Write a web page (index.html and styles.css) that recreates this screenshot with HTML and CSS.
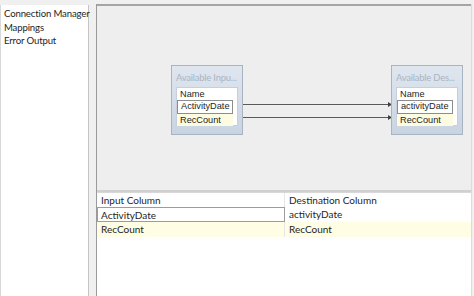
FILE: index.html
```html
<!DOCTYPE html>
<html lang="en">

<head>
    <meta charset="UTF-8">
    <link rel="stylesheet" href="styles.css">
    <title>Mappings</title>
</head>

<body>
    <div class="editor">
        <div class="nav">
            <div class="nav-item">Connection Manager</div>
            <div class="nav-item">Mappings</div>
            <div class="nav-item">Error Output</div>
        </div>

        <div class="main">
            <div class="canvas">
                <div class="table-box box-input">
                    <div class="box-title">Available Inpu...</div>
                    <div class="box-list">
                        <div class="box-row">Name</div>
                        <div class="box-row selected">ActivityDate</div>
                        <div class="box-row mapped">RecCount</div>
                    </div>
                </div>

                <svg class="links" width="150" height="30" viewBox="0 0 150 30">
                    <line x1="0" y1="5.5" x2="148" y2="5.5" stroke="#5a5a5a" stroke-width="1" />
                    <line x1="0" y1="18.5" x2="148" y2="18.5" stroke="#5a5a5a" stroke-width="1" />
                    <polygon points="145,3 149,5.5 145,8" fill="#404040" />
                    <polygon points="145,16 149,18.5 145,21" fill="#404040" />
                </svg>

                <div class="table-box box-dest">
                    <div class="box-title">Available Des...</div>
                    <div class="box-list">
                        <div class="box-row">Name</div>
                        <div class="box-row selected">activityDate</div>
                        <div class="box-row mapped">RecCount</div>
                    </div>
                </div>
            </div>

            <div class="grid">
                <div class="grid-row grid-head">
                    <div class="cell col-input">Input Column</div>
                    <div class="cell">Destination Column</div>
                </div>
                <div class="grid-row">
                    <div class="cell col-input focused">ActivityDate</div>
                    <div class="cell">activityDate</div>
                </div>
                <div class="grid-row highlight">
                    <div class="cell col-input">RecCount</div>
                    <div class="cell">RecCount</div>
                </div>
            </div>
        </div>
    </div>
</body>

</html>
```

FILE: styles.css
```css
/* Page */
body {
    margin: 0;
    background-color: #f0f0f0;
    font-family: Lato, "Open Sans", sans-serif;
    font-size: 10px;
    color: #1e1e1e;
}

.editor {
    display: flex;
    height: 296px;
    overflow: hidden;
}

/* Left navigation */
.nav {
    width: 84px;
    margin-top: 5px;
    padding: 2px 0 0 3px;
    background-color: white;
    border-left: 1px solid #d8d8d8;
    border-right: 1px solid #c4c4c4;
    font-size: 9.6px;
    letter-spacing: -0.15px;
}

.nav-item {
    height: 13.5px;
    line-height: 13.5px;
    white-space: nowrap;
}

/* Right side */
.main {
    flex: 1;
    margin-left: 7px;
    margin-top: 4px;
    margin-right: 2px;
    display: flex;
    flex-direction: column;
    border-left: 1px solid #9a9a9a;
    border-right: 1px solid #dcdcdc;
}

.canvas {
    position: relative;
    height: 184px;
    background-color: #eeeeee;
    border-top: 2px solid #a5a5a5;
    border-bottom: 2px solid #d0d0d0;
}

/* Table boxes on the diagram */
.table-box {
    position: absolute;
    top: 59px;
    width: 72px;
    height: 70px;
    padding: 0 4px;
    box-sizing: border-box;
    border: 1px solid #a9b4c2;
    background: linear-gradient(#dfe6ef, #c9d4e2);
}

.box-input {
    left: 74px;
}

.box-dest {
    left: 294px;
}

.box-title {
    height: 21px;
    line-height: 24px;
    color: #aab4c2;
    font-size: 9.4px;
    letter-spacing: -0.2px;
    white-space: nowrap;
    overflow: hidden;
}

.box-list {
    background-color: white;
    border: 1px solid #c6cfdb;
    height: 36px;
    padding-top: 1px;
}

.box-row {
    height: 11px;
    line-height: 11px;
    padding-left: 3px;
    font-size: 9.2px;
    font-family: "Liberation Sans", Arial, sans-serif;
}

.box-row.selected {
    height: 12px;
    border: 1px solid #8d8d8d;
    margin-right: 4px;
    line-height: 10px;
}

.box-row.mapped {
    height: 12px;
    line-height: 12px;
    background-color: #fdfbe0;
    margin-right: 4px;
}

.links {
    position: absolute;
    left: 146px;
    top: 93px;
}

/* Mapping grid */
.grid {
    flex: 1;
    background-color: white;
}

.grid-row {
    display: flex;
    height: 15px;
    line-height: 14px;
}

.grid-head {
    height: 14px;
    border-top: 1px solid #d8d8d8;
}

.cell {
    flex: 1;
    padding-left: 4px;
    box-sizing: border-box;
    white-space: nowrap;
}

.col-input {
    flex: 0 0 188px;
    border-right: 1px solid #e6e6e6;
}

.focused {
    border: 1px solid #9c9c9c;
    padding-left: 3px;
}

.highlight {
    background-color: #fffde3;
}
```
